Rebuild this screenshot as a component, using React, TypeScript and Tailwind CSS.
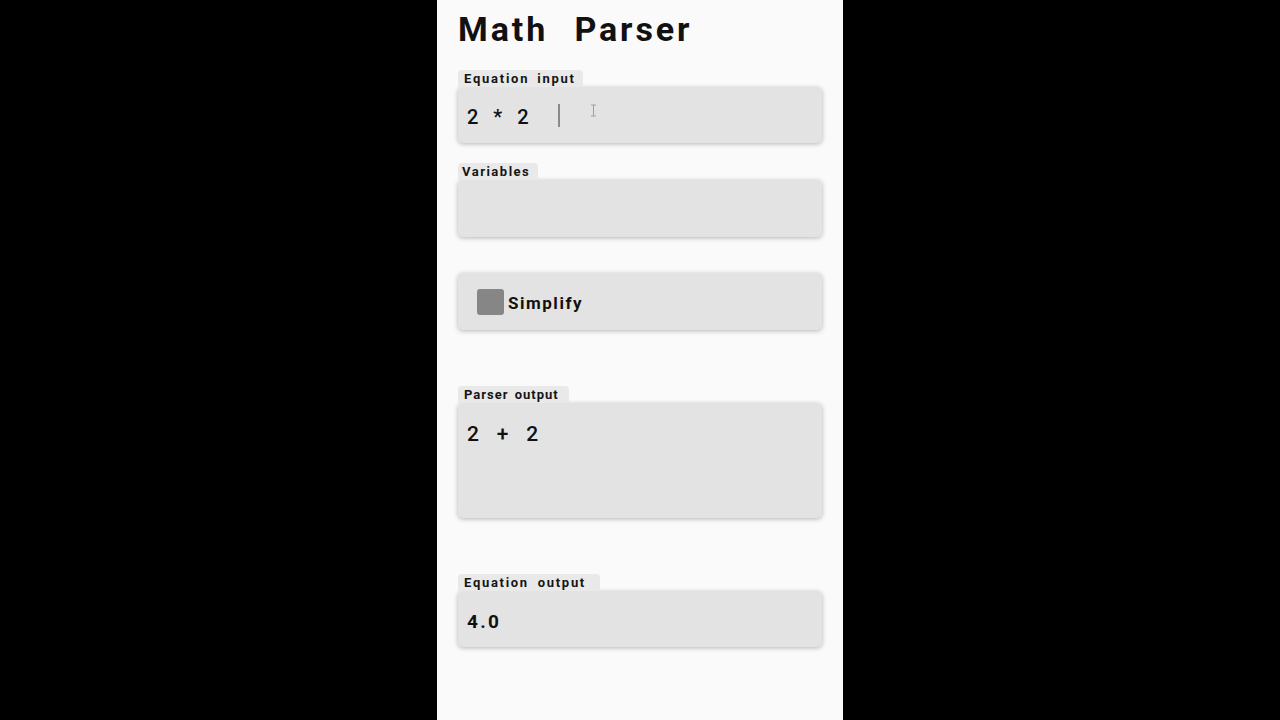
import React from "react";

const font = { fontFamily: "Roboto, 'Noto Sans', sans-serif" };

function Tab({
  children,
  tracking,
  pad = "pl-[6px] pr-[7px]",
}: {
  children: React.ReactNode;
  tracking: string;
  pad?: string;
}) {
  return (
    <div className="flex">
      <div
        className={
          "h-[17px] rounded-t-[4px] bg-[#e9e9e9] text-[13px] leading-[18px] font-bold text-[#151515] " +
          pad +
          " " +
          tracking
        }
      >
        {children}
      </div>
    </div>
  );
}

function Box({ className = "", children }: { className?: string; children?: React.ReactNode }) {
  return (
    <div
      className={
        "w-[364px] rounded-[5px] bg-[#e3e3e3] shadow-[0_1px_5px_rgba(0,0,0,0.28)] " + className
      }
    >
      {children}
    </div>
  );
}

function IBeam() {
  return (
    <svg width="7" height="13" viewBox="0 0 7 13" className="ml-[30px] -mt-[14px]">
      <path d="M1 1h5M1 12h5M3.5 1v11" stroke="#a0a0a0" strokeWidth="1" fill="none" />
    </svg>
  );
}

export default function App() {
  return (
    <div className="flex h-[720px] w-full justify-center bg-black" style={font}>
      <div className="flex h-full w-[406px] flex-col bg-[#fafafa] pl-[21px]">
        <h1 className="mt-[9px] h-[40px] text-[34px] leading-[40px] font-bold tracking-[0.085em] [word-spacing:15px] text-[#111]">
          Math Parser
        </h1>

        <div className="mt-[21px]">
          <Tab tracking="tracking-[1.75px] [word-spacing:3px]">Equation input</Tab>
          <Box className="flex h-[56px] items-center pl-[9px] pt-[4px]">
            <span className="text-[20px] font-medium tracking-[0.25em] text-[#111]">2 * 2</span>
            <span className="ml-[24px] -mt-[4px] h-[23px] w-[2px] bg-[#8a8a8a]" />
            <IBeam />
          </Box>
        </div>

        <div className="mt-[20px]">
          <Tab tracking="tracking-[1.5px]" pad="pl-[4px] pr-[8px]">
            Variables
          </Tab>
          <Box className="h-[57px]" />
        </div>

        <div className="mt-[36px]">
          <Box className="flex h-[57px] items-center pl-[19px]">
            <span className="h-[26px] w-[27px] rounded-[3px] bg-[#868686]" />
            <span className="ml-[4px] mt-[5px] text-[17px] font-bold tracking-[0.09em] text-[#111]">
              Simplify
            </span>
          </Box>
        </div>

        <div className="mt-[56px]">
          <Tab tracking="tracking-[1px] [word-spacing:2px]" pad="pl-[6px] pr-[10px]">
            Parser output
          </Tab>
          <Box className="h-[115px] pl-[9px] pt-[18px]">
            <span className="text-[21px] leading-[26px] font-medium tracking-[0.3em] text-[#111]">2 + 2</span>
          </Box>
        </div>

        <div className="mt-[56px]">
          <Tab tracking="tracking-[1.7px] [word-spacing:4px]" pad="pl-[6px] pr-[14px]">
            Equation output
          </Tab>
          <Box className="flex h-[56px] items-center pl-[9px] pt-[6px]">
            <span className="text-[19px] font-bold tracking-[0.12em] text-[#111]">4.0</span>
          </Box>
        </div>
      </div>
    </div>
  );
}
